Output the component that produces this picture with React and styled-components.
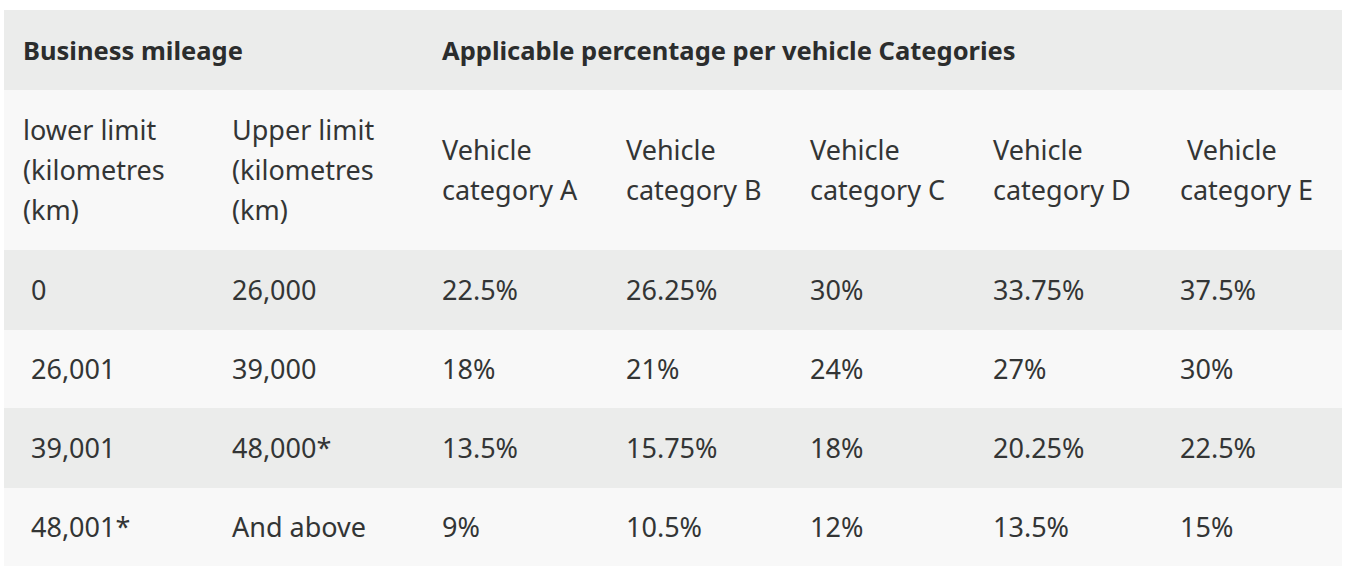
import React from 'react'
import styled, { createGlobalStyle } from 'styled-components'

const GlobalStyle = createGlobalStyle`
  body {
    margin: 0;
    background: #ffffff;
    font-family: "Noto Sans", "Open Sans", sans-serif;
  }
`;

const Page = styled.div`
  padding: 10px 4px 12px 4px;
`;

const Table = styled.table`
  width: 1338px;
  border-collapse: collapse;
  table-layout: fixed;
  color: #333535;
  font-size: 27px;
`;

const HeadRow = styled.tr`
  background: #ebeceb;
  height: 80px;
`;

const SubRow = styled.tr`
  background: #f8f8f8;
  height: 160px;
`;

const BodyRow = styled.tr`
  background: ${({ $striped }) => ($striped ? '#ebeceb' : '#f8f8f8')};
  height: ${({ $h }) => $h || 79}px;
`;

const HeadCell = styled.th`
  text-align: left;
  font-weight: 700;
  font-size: 25.5px;
  padding: 0 8px 0 19px;
  vertical-align: middle;
  color: #2b2d2d;
`;

const Cell = styled.td`
  padding: 0 4px 0 ${({ $indent }) => ($indent ? 27 : 19)}px;
  vertical-align: middle;
  line-height: 40px;
`;

const cols = [209, 210, 184, 184, 183, 187, 181];

const rows = [
  ['0', '26,000', '22.5%', '26.25%', '30%', '33.75%', '37.5%'],
  ['26,001', '39,000', '18%', '21%', '24%', '27%', '30%'],
  ['39,001', '48,000*', '13.5%', '15.75%', '18%', '20.25%', '22.5%'],
  ['48,001*', 'And above', '9%', '10.5%', '12%', '13.5%', '15%'],
];

const App = () => {
  return (
    <Page>
      <GlobalStyle />
      <Table>
        <colgroup>
          {cols.map((w, i) => (
            <col key={i} style={{ width: w }} />
          ))}
        </colgroup>
        <thead>
          <HeadRow>
            <HeadCell colSpan={2}>Business mileage</HeadCell>
            <HeadCell colSpan={5}>Applicable percentage per vehicle Categories</HeadCell>
          </HeadRow>
        </thead>
        <tbody>
          <SubRow>
            <Cell>lower limit (kilometres (km)</Cell>
            <Cell>Upper limit (kilometres (km)</Cell>
            <Cell>Vehicle category A</Cell>
            <Cell>Vehicle category B</Cell>
            <Cell>Vehicle category C</Cell>
            <Cell>Vehicle category D</Cell>
            <Cell>{'\u00a0'}Vehicle category E</Cell>
          </SubRow>
          {rows.map((r, i) => (
            <BodyRow key={i} $striped={i % 2 === 0} $h={i % 2 === 0 ? 80 : 78}>
              {r.map((v, j) => (
                <Cell key={j} $indent={j === 0}>{v}</Cell>
              ))}
            </BodyRow>
          ))}
        </tbody>
      </Table>
    </Page>
  )
}

export default App
